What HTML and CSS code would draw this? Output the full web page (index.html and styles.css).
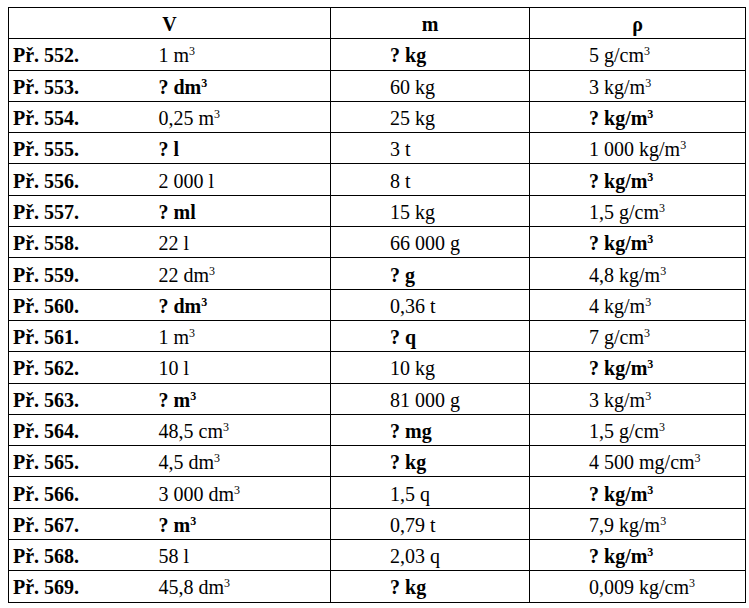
FILE: index.html
```html
<!DOCTYPE html>
<html lang="cs">
<head>
<meta charset="utf-8">
<title>Hustota</title>
<link rel="stylesheet" href="styles.css">
</head>
<body>
<table class="tab">
<colgroup><col class="c1"><col class="c2"><col class="c3"><col class="c4"></colgroup>
<thead>
<tr><th colspan="2">V</th><th>m</th><th>ρ</th></tr>
</thead>
<tbody>
<tr><td class="lab">Př. 552.</td><td class="v">1 m<sup>3</sup></td><td class="m"><b>? kg</b></td><td class="r">5 g/cm<sup>3</sup></td></tr>
<tr><td class="lab">Př. 553.</td><td class="v"><b>? dm<sup>3</sup></b></td><td class="m">60 kg</td><td class="r">3 kg/m<sup>3</sup></td></tr>
<tr><td class="lab">Př. 554.</td><td class="v">0,25 m<sup>3</sup></td><td class="m">25 kg</td><td class="r"><b>? kg/m<sup>3</sup></b></td></tr>
<tr><td class="lab">Př. 555.</td><td class="v"><b>? l</b></td><td class="m">3 t</td><td class="r">1 000 kg/m<sup>3</sup></td></tr>
<tr><td class="lab">Př. 556.</td><td class="v">2 000 l</td><td class="m">8 t</td><td class="r"><b>? kg/m<sup>3</sup></b></td></tr>
<tr><td class="lab">Př. 557.</td><td class="v"><b>? ml</b></td><td class="m">15 kg</td><td class="r">1,5 g/cm<sup>3</sup></td></tr>
<tr><td class="lab">Př. 558.</td><td class="v">22 l</td><td class="m">66 000 g</td><td class="r"><b>? kg/m<sup>3</sup></b></td></tr>
<tr><td class="lab">Př. 559.</td><td class="v">22 dm<sup>3</sup></td><td class="m"><b>? g</b></td><td class="r">4,8 kg/m<sup>3</sup></td></tr>
<tr><td class="lab">Př. 560.</td><td class="v"><b>? dm<sup>3</sup></b></td><td class="m">0,36 t</td><td class="r">4 kg/m<sup>3</sup></td></tr>
<tr><td class="lab">Př. 561.</td><td class="v">1 m<sup>3</sup></td><td class="m"><b>? q</b></td><td class="r">7 g/cm<sup>3</sup></td></tr>
<tr><td class="lab">Př. 562.</td><td class="v">10 l</td><td class="m">10 kg</td><td class="r"><b>? kg/m<sup>3</sup></b></td></tr>
<tr><td class="lab">Př. 563.</td><td class="v"><b>? m<sup>3</sup></b></td><td class="m">81 000 g</td><td class="r">3 kg/m<sup>3</sup></td></tr>
<tr><td class="lab">Př. 564.</td><td class="v">48,5 cm<sup>3</sup></td><td class="m"><b>? mg</b></td><td class="r">1,5 g/cm<sup>3</sup></td></tr>
<tr><td class="lab">Př. 565.</td><td class="v">4,5 dm<sup>3</sup></td><td class="m"><b>? kg</b></td><td class="r">4 500 mg/cm<sup>3</sup></td></tr>
<tr><td class="lab">Př. 566.</td><td class="v">3 000 dm<sup>3</sup></td><td class="m">1,5 q</td><td class="r"><b>? kg/m<sup>3</sup></b></td></tr>
<tr><td class="lab">Př. 567.</td><td class="v"><b>? m<sup>3</sup></b></td><td class="m">0,79 t</td><td class="r">7,9 kg/m<sup>3</sup></td></tr>
<tr><td class="lab">Př. 568.</td><td class="v">58 l</td><td class="m">2,03 q</td><td class="r"><b>? kg/m<sup>3</sup></b></td></tr>
<tr><td class="lab">Př. 569.</td><td class="v">45,8 dm<sup>3</sup></td><td class="m"><b>? kg</b></td><td class="r">0,009 kg/cm<sup>3</sup></td></tr>
</tbody>
</table>
</body>
</html>
```
FILE: styles.css
```css
html, body {
  background: #fff;
}
body {
  margin: 7px 0 0 8px;
  font-family: "Liberation Serif", "Times New Roman", serif;
  font-size: 20px;
  color: #000;
}
.tab {
  border-collapse: collapse;
  table-layout: fixed;
  width: 737px;
}
.c1 { width: 142px; }
.c2 { width: 180px; }
.c3 { width: 199px; }
.c4 { width: 216px; }
.tab th,
.tab td {
  height: 31.3px;
  padding: 3px 0 0 0;
  border: 1px solid #000;
  vertical-align: middle;
  white-space: nowrap;
  box-sizing: border-box;
  line-height: 23px;
}
.tab th {
  font-weight: bold;
  text-align: center;
}
.tab td.lab {
  font-weight: bold;
  padding-left: 4px;
  border-right: none;
}
.tab td.v {
  border-left: none;
  padding-left: 8px;
}
.tab td.m,
.tab td.r {
  padding-left: 59px;
}
sup {
  font-size: 12px;
  line-height: 0;
  vertical-align: 7px;
}
```
